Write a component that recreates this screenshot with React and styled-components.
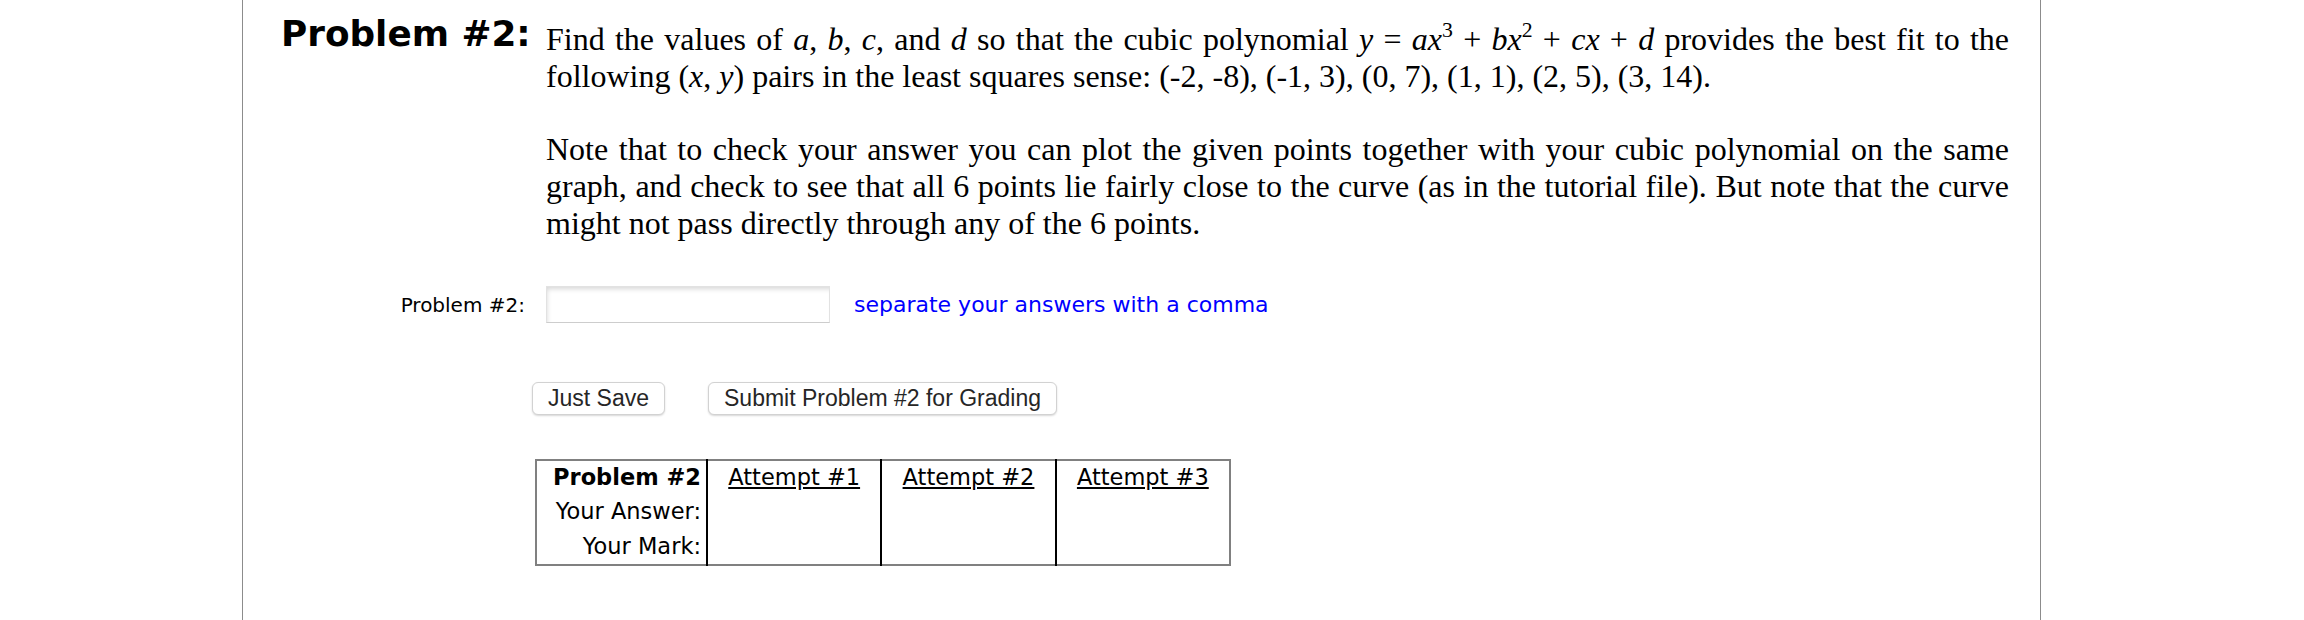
import React from 'react';
import styled, { createGlobalStyle } from 'styled-components';

const Global = createGlobalStyle`
  html, body { margin: 0; padding: 0; background: #fff; }
  body { font-family: "DejaVu Sans", Verdana, sans-serif; color: #000; }
`;

const Page = styled.div`
  box-sizing: border-box;
  margin-left: 242px;
  width: 1799px;
  min-height: 620px;
  border-left: 1px solid #8c8c8c;
  border-right: 1px solid #8c8c8c;
  padding: 13px 0 0 38px;
`;

const QuestionGrid = styled.div`
  display: grid;
  grid-template-columns: 249px 1463px;
  column-gap: 16px;
  align-items: ${p => (p.$center ? 'center' : 'start')};
  margin-top: ${p => p.$top || 0}px;
`;

const Heading = styled.h2`
  margin: 0;
  font-family: "DejaVu Sans", Verdana, sans-serif;
  font-weight: bold;
  font-size: 35.8px;
  line-height: normal;
  white-space: nowrap;
`;

const Statement = styled.div`
  padding-top: 8px;
  font-family: "Liberation Serif", "Times New Roman", serif;
  font-size: 32px;
  line-height: 36.7px;
`;

const Paragraph = styled.p`
  margin: 0;
  & + & {
    margin-top: 36.7px;
  }
`;

const Line = styled.span`
  display: block;
  text-align: ${p => (p.$last ? 'left' : 'justify')};
  text-align-last: ${p => (p.$last ? 'left' : 'justify')};
`;

const V = styled.i`
  font-style: italic;
`;

const Sup = styled.sup`
  font-size: 0.68em;
  line-height: 0;
  vertical-align: baseline;
  position: relative;
  top: -0.62em;
`;

const Label = styled.label`
  font-size: 20px;
  text-align: right;
  padding-right: 5px;
`;

const Field = styled.div`
  display: flex;
  align-items: center;
  gap: 24px;
`;

const Input = styled.input`
  box-sizing: border-box;
  width: 284px;
  height: 37px;
  margin: 0;
  border: 1px solid #e2e2e2;
  border-bottom-color: #cdcdcd;
  background: #fff;
  box-shadow: inset 2px 4px 5px -2px rgba(0, 0, 0, 0.16);
  font-size: 20px;
  outline: none;
`;

const Hint = styled.span`
  color: #0000ff;
  font-size: 22px;
`;

const ButtonRow = styled.div`
  display: flex;
  gap: 43px;
  margin: 59px 0 0 251px;
`;

const Button = styled.button`
  height: 33px;
  padding: 0 15px;
  font-family: "Liberation Sans", Arial, sans-serif;
  font-size: 23px;
  color: #262626;
  background: #fff;
  border: 1px solid #d2d2d2;
  border-radius: 6px;
  box-shadow: 0 1px 2px rgba(0, 0, 0, 0.16);
`;

const Attempts = styled.table`
  margin: 44px 0 0 254px;
  border-collapse: collapse;
  border: 2px solid #808080;
  table-layout: fixed;
  width: 696px;
  font-size: 22.5px;
`;

const Cell = styled.td`
  box-sizing: border-box;
  height: 35px;
  padding: 3px 5px 0;
  line-height: normal;
  text-align: ${p => (p.$right ? 'right' : 'center')};
  font-weight: ${p => (p.$bold ? 'bold' : 'normal')};
  width: ${p => (p.$first ? '171px' : 'auto')};
  border-left: ${p => (p.$first ? 'none' : '2px solid #000')};
  vertical-align: top;
  white-space: nowrap;
`;

const AttemptLink = styled.a`
  color: #000;
  text-decoration: underline;
`;

export default function App() {
  return (
    <>
      <Global />
      <Page>
        <QuestionGrid>
          <Heading>Problem #2:</Heading>
          <Statement>
            <Paragraph>
              <Line>
                Find the values of <V>a</V>, <V>b</V>, <V>c</V>, and <V>d</V> so that the cubic polynomial{' '}
                <V>y</V> = <V>ax</V>
                <Sup>3</Sup> + <V>bx</V>
                <Sup>2</Sup> + <V>cx</V> + <V>d</V> provides the best fit to the
              </Line>
              <Line $last>
                following (<V>x</V>, <V>y</V>) pairs in the least squares sense: (-2, -8), (-1, 3), (0, 7), (1, 1), (2, 5), (3, 14).
              </Line>
            </Paragraph>
            <Paragraph>
              <Line>
                Note that to check your answer you can plot the given points together with your cubic polynomial on the same
              </Line>
              <Line>
                graph, and check to see that all 6 points lie fairly close to the curve (as in the tutorial file). But note that the curve
              </Line>
              <Line $last>might not pass directly through any of the 6 points.</Line>
            </Paragraph>
          </Statement>
        </QuestionGrid>

        <QuestionGrid $center $top={45}>
          <Label htmlFor="ans2">Problem #2:</Label>
          <Field>
            <Input id="ans2" type="text" />
            <Hint>separate your answers with a comma</Hint>
          </Field>
        </QuestionGrid>

        <ButtonRow>
          <Button>Just Save</Button>
          <Button>Submit Problem #2 for Grading</Button>
        </ButtonRow>

        <Attempts>
          <tbody>
            <tr>
              <Cell $first $right $bold>Problem #2</Cell>
              <Cell><AttemptLink href="#">Attempt #1</AttemptLink></Cell>
              <Cell><AttemptLink href="#">Attempt #2</AttemptLink></Cell>
              <Cell><AttemptLink href="#">Attempt #3</AttemptLink></Cell>
            </tr>
            <tr>
              <Cell $first $right>Your Answer:</Cell>
              <Cell />
              <Cell />
              <Cell />
            </tr>
            <tr>
              <Cell $first $right>Your Mark:</Cell>
              <Cell />
              <Cell />
              <Cell />
            </tr>
          </tbody>
        </Attempts>
      </Page>
    </>
  );
}
